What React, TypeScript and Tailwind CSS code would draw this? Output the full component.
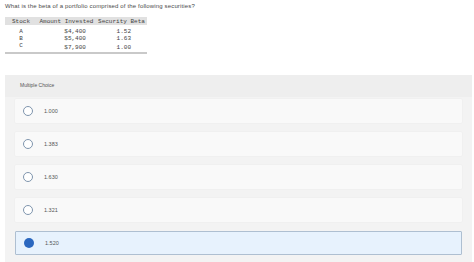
const ROWS = [
  { stock: "A", amount: "$4,400", beta: "1.52" },
  { stock: "B", amount: "$5,400", beta: "1.63" },
  { stock: "C", amount: "$7,900", beta: "1.00" },
];

const CHOICES = ["1.000", "1.383", "1.630", "1.321", "1.520"];
const SELECTED = 4;

export default function App() {
  return (
    <div className="w-[474px] h-[262px] overflow-hidden bg-white font-['Liberation_Sans',Arial,sans-serif] text-[#333]">
      <p className="pl-[5px] pt-[2px] text-[6px] tracking-[0.15px] leading-[9px] text-[#4a4a4a]">
        What is the beta of a portfolio comprised of the following securities?
      </p>

      <table className="ml-[5px] mt-[6px] w-[142px] border-b-2 border-[#c9c9c9] font-['Liberation_Mono',monospace] text-[6px] leading-[7px] text-[#444]">
        <thead>
          <tr className="bg-[#e1e1e1]">
            <th className="font-normal text-center w-[32px] h-[8px]">Stock</th>
            <th className="font-normal text-center">Amount Invested</th>
            <th className="font-normal text-center">Security Beta</th>
          </tr>
        </thead>
        <tbody>
          {ROWS.map((r, i) => (
            <tr key={r.stock}>
              <td className={i === 0 ? "text-center pt-[3px]" : i === 2 ? "text-center pb-[3px]" : "text-center"}>{r.stock}</td>
              <td className={i === 0 ? "text-right pr-[10px] pt-[3px]" : "text-right pr-[10px]"}>{r.amount}</td>
              <td className={i === 0 ? "text-right pr-[16px] pt-[3px]" : "text-right pr-[16px]"}>{r.beta}</td>
            </tr>
          ))}
        </tbody>
      </table>

      <div className="ml-[5px] mt-[21px] w-[467px] h-[200px] bg-[#f3f3f3]">
        <div className="h-[22px] bg-[#eeeeee] pl-[15px] flex items-center text-[5px] text-[#555]">
          Multiple Choice
        </div>
        <div className="flex flex-col gap-[9px] pt-[2px] px-[10px]">
          {CHOICES.map((c, i) => {
            const sel = i === SELECTED;
            return (
              <div
                key={c}
                className={
                  sel
                    ? "h-[24px] flex items-center rounded-[1px] border border-[#aebfd1] bg-[#e7f2fd]"
                    : "h-[24px] flex items-center rounded-[1px] bg-[#f9f9f9] shadow-[0_0_2px_rgba(0,0,0,0.06)]"
                }
              >
                <span
                  className={
                    sel
                      ? "ml-[8px] w-[10px] h-[10px] rounded-full bg-[#2a67bf]"
                      : "ml-[8px] w-[10px] h-[10px] rounded-full border border-[#7f95ad] bg-white"
                  }
                />
                <span className="ml-[11px] text-[5.5px] text-[#555]">{c}</span>
              </div>
            );
          })}
        </div>
      </div>
    </div>
  );
}
